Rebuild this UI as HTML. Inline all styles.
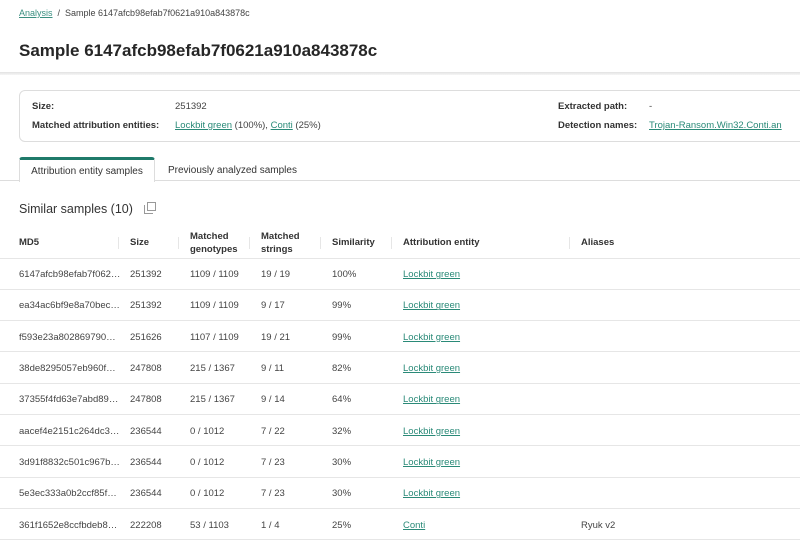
<!DOCTYPE html>
<html><head><style>
*{margin:0;padding:0;box-sizing:border-box}
body{width:800px;height:542px;overflow:hidden;background:#fff;font-family:"Liberation Sans",sans-serif;color:#333;font-size:10px}
a{color:#2a8a78;text-decoration:underline}
.bc{position:absolute;left:19px;top:8px;font-size:9px;color:#444}
.bc a{color:#3a8f80}
h1{position:absolute;left:19px;top:41px;font-size:17px;font-weight:600;color:#262626}
.hdrline{position:absolute;left:0;top:72px;width:800px;height:3px;background:linear-gradient(#e2e2e2,#f6f6f6)}
.card{position:absolute;left:19px;top:90px;width:800px;height:52px;border:1px solid #ddd;border-radius:6px}
.l{position:absolute;font-weight:bold;color:#333;font-size:9.5px}
.v{position:absolute;color:#444;font-size:9.5px}
.tabs{position:absolute;left:0;top:180px;width:800px;height:1px;background:#ddd}
.tab1{position:absolute;left:19px;top:157px;width:136px;height:25px;border:1px solid #ddd;border-top:3px solid #1f7a6a;border-bottom:none;background:#fff;border-radius:3px 3px 0 0;text-align:center;line-height:23px;font-size:10px;color:#333}
.tab2{position:absolute;left:168px;top:165px;font-size:10px;color:#333}
.sim{position:absolute;left:19px;top:202px;font-size:12.5px;color:#333}
table{position:absolute;left:0;top:228px;border-collapse:collapse;width:800px}
th{text-align:left;font-weight:bold;font-size:9.5px;height:30px;padding-left:19px;color:#333;border-bottom:1px solid #e6e6e6;line-height:13px;position:relative}
th+th::before{content:"";position:absolute;left:-4px;top:9px;height:12px;width:1px;background:#e6e6e6}
td{height:31.3px;padding-left:19px;font-size:9.5px;color:#444;border-bottom:1px solid #e6e6e6;padding-top:2px}
th+th,td+td{padding-left:8px}
</style></head><body>
<div class="bc"><a>Analysis</a> &nbsp;/ &nbsp;Sample 6147afcb98efab7f0621a910a843878c</div>
<h1>Sample 6147afcb98efab7f0621a910a843878c</h1>
<div class="hdrline"></div>
<div class="card"></div>
<div class="l" style="left:32px;top:101px">Size:</div>
<div class="v" style="left:175px;top:101px">251392</div>
<div class="l" style="left:32px;top:120px">Matched attribution entities:</div>
<div class="v" style="left:175px;top:120px"><a>Lockbit green</a> (100%), <a>Conti</a> (25%)</div>
<div class="l" style="left:558px;top:101px">Extracted path:</div>
<div class="v" style="left:649px;top:101px">-</div>
<div class="l" style="left:558px;top:120px">Detection names:</div>
<div class="v" style="left:649px;top:120px"><a>Trojan-Ransom.Win32.Conti.an</a></div>
<div class="tabs"></div>
<div class="tab1">Attribution entity samples</div>
<div class="tab2">Previously analyzed samples</div>
<div class="sim">Similar samples (10) <svg width="12" height="12" style="margin-left:8px;vertical-align:-1px" viewBox="0 0 12 12"><rect x="3.5" y="0.5" width="8" height="8" fill="none" stroke="#999"/><path d="M0.5 3v8.5H9" fill="none" stroke="#999"/></svg></div>
<table>
<colgroup><col style="width:122px"><col style="width:60px"><col style="width:71px"><col style="width:71px"><col style="width:71px"><col style="width:178px"><col></colgroup>
<tr><th>MD5</th><th>Size</th><th>Matched<br>genotypes</th><th>Matched<br>strings</th><th>Similarity</th><th>Attribution entity</th><th>Aliases</th></tr>
<tr><td>6147afcb98efab7f062…</td><td>251392</td><td>1109 / 1109</td><td>19 / 19</td><td>100%</td><td><a>Lockbit green</a></td><td></td></tr>
<tr><td>ea34ac6bf9e8a70bec…</td><td>251392</td><td>1109 / 1109</td><td>9 / 17</td><td>99%</td><td><a>Lockbit green</a></td><td></td></tr>
<tr><td>f593e23a802869790…</td><td>251626</td><td>1107 / 1109</td><td>19 / 21</td><td>99%</td><td><a>Lockbit green</a></td><td></td></tr>
<tr><td>38de8295057eb960f…</td><td>247808</td><td>215 / 1367</td><td>9 / 11</td><td>82%</td><td><a>Lockbit green</a></td><td></td></tr>
<tr><td>37355f4fd63e7abd89…</td><td>247808</td><td>215 / 1367</td><td>9 / 14</td><td>64%</td><td><a>Lockbit green</a></td><td></td></tr>
<tr><td>aacef4e2151c264dc3…</td><td>236544</td><td>0 / 1012</td><td>7 / 22</td><td>32%</td><td><a>Lockbit green</a></td><td></td></tr>
<tr><td>3d91f8832c501c967b…</td><td>236544</td><td>0 / 1012</td><td>7 / 23</td><td>30%</td><td><a>Lockbit green</a></td><td></td></tr>
<tr><td>5e3ec333a0b2ccf85f…</td><td>236544</td><td>0 / 1012</td><td>7 / 23</td><td>30%</td><td><a>Lockbit green</a></td><td></td></tr>
<tr><td>361f1652e8ccfbdeb8…</td><td>222208</td><td>53 / 1103</td><td>1 / 4</td><td>25%</td><td><a>Conti</a></td><td>Ryuk v2</td></tr>
</table>
</body></html>
